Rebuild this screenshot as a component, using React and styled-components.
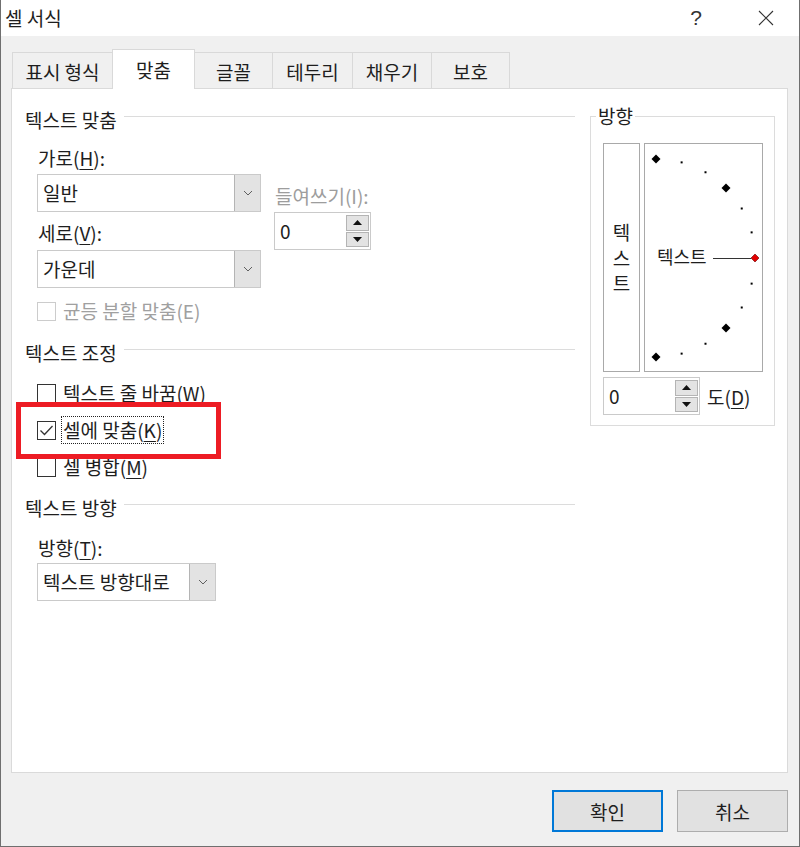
import React from "react";
import styled, { createGlobalStyle } from "styled-components";

const GlobalStyle = createGlobalStyle`
  html, body { margin: 0; padding: 0; background: #fff; }
  body { font-family: "Noto Sans CJK KR", "Noto Sans", sans-serif; }
`;

const Window = styled.div`
  position: relative;
  width: 800px;
  height: 847px;
  box-sizing: border-box;
  border: 1px solid #6f6f6f;
  border-top: none;
  background: #f0f0f0;
  display: flex;
  flex-direction: column;
  font-size: 19px;
  color: #1e1e1e;
`;

const TitleBar = styled.div`
  height: 36px;
  flex: none;
  background: #fff;
  display: flex;
  align-items: center;
  padding-left: 4px;
`;

const TitleText = styled.div`
  flex: 1;
  line-height: 36px;
`;

const TitleButton = styled.div`
  width: ${(p) => p.w}px;
  height: 36px;
  margin-right: ${(p) => p.mr || 0}px;
  display: flex;
  align-items: center;
  justify-content: center;
  color: #333;
  font-family: "Liberation Sans", sans-serif;
  font-size: 21px;
`;

const Body = styled.div`
  flex: 1;
  padding: 0 11px 0 10px;
  display: flex;
  flex-direction: column;
`;

const TabRow = styled.div`
  height: 52px;
  display: flex;
  align-items: flex-end;
  padding-left: 1px;
`;

const Tab = styled.div`
  position: relative;
  box-sizing: border-box;
  width: ${(p) => p.w}px;
  height: ${(p) => (p.active ? 40 : 36)}px;
  margin-left: -1px;
  margin-bottom: ${(p) => (p.active ? -1 : 0)}px;
  border: 1px solid #d9d9d9;
  border-bottom: none;
  background: ${(p) => (p.active ? "#fff" : "#f0f0f0")};
  z-index: ${(p) => (p.active ? 1 : 0)};
  display: flex;
  align-items: center;
  justify-content: center;
  padding-top: ${(p) => (p.active ? 0 : 1)}px;
  &:first-child { margin-left: 0; }
`;

const Panel = styled.div`
  box-sizing: border-box;
  height: 685px;
  background: #fff;
  border: 1px solid #dadada;
  display: flex;
  padding-left: 13px;
`;

const LeftColumn = styled.div`
  width: 550px;
  padding-top: 19px;
  display: flex;
  flex-direction: column;
`;

const SectionHeader = styled.div`
  display: flex;
  align-items: center;
  height: 24px;
  line-height: 24px;
  margin-top: ${(p) => p.mt || 0}px;
  &::after {
    content: "";
    flex: 1;
    height: 1px;
    background: #dcdcdc;
    margin-left: 7px;
    margin-bottom: 7px;
  }
`;

const Indent = styled.div`
  margin-left: 12px;
  display: flex;
  flex-direction: column;
`;

const FieldRow = styled.div`
  display: flex;
  margin-top: 14px;
`;

const FieldColumn = styled.div`
  display: flex;
  flex-direction: column;
  padding-top: ${(p) => p.pt || 0}px;
  margin-left: ${(p) => p.ml || 0}px;
`;

const Label = styled.div`
  height: 24px;
  line-height: 24px;
  padding-left: 1px;
  margin-top: ${(p) => p.mt || 0}px;
  color: ${(p) => (p.disabled ? "#9d9d9d" : "inherit")};
  u { text-underline-offset: 3px; text-decoration-thickness: 1px; }
`;

const SelectBox = styled.div`
  box-sizing: border-box;
  width: ${(p) => p.w}px;
  height: 38px;
  margin-top: ${(p) => p.mt || 0}px;
  border: 1px solid #cacaca;
  background: #fff;
  display: flex;
`;

const SelectValue = styled.div`
  flex: 1;
  padding-left: 5px;
  line-height: 36px;
`;

const SelectButton = styled.div`
  width: 25px;
  background: #e3e3e3;
  border-left: 1px solid #b4b4b4;
  display: flex;
  align-items: center;
  justify-content: center;
`;

const SpinBox = styled.div`
  box-sizing: border-box;
  width: 97px;
  height: 38px;
  margin-top: ${(p) => p.mt || 0}px;
  border: 1px solid #cacaca;
  background: #fff;
  display: flex;
`;

const SpinValue = styled.div`
  flex: 1;
  padding-left: 5px;
  line-height: 35px;
`;

const SpinButtons = styled.div`
  width: 23px;
  margin: 2px 1px 2px 0;
  display: flex;
  flex-direction: column;
  gap: 1px;
`;

const SpinButton = styled.div`
  flex: 1;
  box-sizing: border-box;
  background: #e3e3e3;
  border: 1px solid #b4b4b4;
  display: flex;
  align-items: center;
  justify-content: center;
`;

const CheckRow = styled.div`
  display: flex;
  align-items: center;
  height: 28px;
  margin-top: ${(p) => p.mt || 0}px;
  color: ${(p) => (p.disabled ? "#a0a0a0" : "inherit")};
  u { text-underline-offset: 3px; text-decoration-thickness: 1px; }
`;

const Box = styled.div`
  box-sizing: border-box;
  width: 19px;
  height: 19px;
  border: 1px solid ${(p) => (p.disabled ? "#cccccc" : "#333")};
  background: #fff;
  display: flex;
  align-items: center;
  justify-content: center;
`;

const CheckLabel = styled.span`
  margin-left: 5px;
  padding: 0 1px;
  line-height: 26px;
  border: 1px ${(p) => (p.focused ? "dotted #222" : "solid transparent")};
`;

const Highlight = styled.div`
  position: absolute;
  left: 15px;
  top: 402px;
  width: 205px;
  height: 57px;
  box-sizing: border-box;
  border: 5px solid #ed1c24;
  pointer-events: none;
`;

const GroupBox = styled.fieldset`
  box-sizing: border-box;
  width: 185px;
  height: 321px;
  margin: 16px 0 0 15px;
  padding: 16px 0 0 12px;
  border: 1px solid #dcdcdc;
  min-width: 0;
`;

const Legend = styled.legend`
  margin-left: -7px;
  padding: 0 2px;
  line-height: 22px;
`;

const OrientRow = styled.div`
  display: flex;
  gap: 4px;
`;

const VerticalText = styled.div`
  box-sizing: border-box;
  width: 37px;
  height: 229px;
  border: 1px solid #a9a9a9;
  display: flex;
  flex-direction: column;
  align-items: center;
  justify-content: center;
  line-height: 25.5px;
`;

const Dial = styled.div`
  box-sizing: border-box;
  width: 119px;
  height: 229px;
  border: 1px solid #a9a9a9;
  svg { display: block; }
`;

const DegreeRow = styled.div`
  display: flex;
  align-items: center;
  margin-top: 5px;
  u { text-underline-offset: 3px; text-decoration-thickness: 1px; }
`;

const Degree = styled.span`
  margin-left: 7px;
`;

const ButtonRow = styled.div`
  display: flex;
  justify-content: flex-end;
  gap: 14px;
  margin-top: 17px;
`;

const DialogButton = styled.div`
  box-sizing: border-box;
  width: 111px;
  height: 42px;
  background: #e1e1e1;
  border: ${(p) => (p.primary ? "2px solid #0078d7" : "1px solid #adadad")};
  display: flex;
  align-items: center;
  justify-content: center;
`;

const Chevron = () => (
  <svg width="10" height="6" viewBox="0 0 10 6">
    <polyline points="1,1 5,5 9,1" fill="none" stroke="#606060" strokeWidth="1" />
  </svg>
);

const Arrow = ({ up }) => (
  <svg width="9" height="5" viewBox="0 0 9 5">
    <polygon points={up ? "0,5 9,5 4.5,0" : "0,0 9,0 4.5,5"} fill="#111" />
  </svg>
);

const Select = ({ value, w, mt }) => (
  <SelectBox w={w} mt={mt}>
    <SelectValue>{value}</SelectValue>
    <SelectButton><Chevron /></SelectButton>
  </SelectBox>
);

const Spin = ({ value, mt }) => (
  <SpinBox mt={mt}>
    <SpinValue>{value}</SpinValue>
    <SpinButtons>
      <SpinButton><Arrow up /></SpinButton>
      <SpinButton><Arrow /></SpinButton>
    </SpinButtons>
  </SpinBox>
);

const Check = ({ checked, disabled, focused, mt, children }) => (
  <CheckRow mt={mt} disabled={disabled}>
    <Box disabled={disabled}>
      {checked && (
        <svg width="15" height="13" viewBox="0 0 15 13">
          <polyline points="1.5,6.5 5.5,10.5 13.5,2" fill="none" stroke="#333" strokeWidth="1.3" />
        </svg>
      )}
    </Box>
    <CheckLabel focused={focused}>{children}</CheckLabel>
  </CheckRow>
);

const cx = 11;
const cy = 114;
const r = 99;
const marks = [90, 75, 60, 45, 30, 15, -15, -30, -45, -60, -75, -90].map((deg) => {
  const a = (deg * Math.PI) / 180;
  return { x: cx + r * Math.cos(a), y: cy - r * Math.sin(a), big: Math.abs(deg) % 45 === 0 };
});

const diamond = (x, y, h) => `${x},${y - h} ${x + h},${y} ${x},${y + h} ${x - h},${y}`;

const OrientationDial = () => (
  <svg width="117" height="227" viewBox="0 0 117 227">
    {marks.map((m, i) =>
      m.big ? (
        <polygon key={i} points={diamond(m.x, m.y, 4.5)} fill="#000" />
      ) : (
        <rect key={i} x={m.x - 1} y={m.y - 1} width="2" height="2" fill="#000" />
      )
    )}
    <text x="12" y={cy + 6} fontSize="18" fill="#1e1e1e" fontFamily='"Noto Sans CJK KR", sans-serif'>텍스트</text>
    <line x1="68" y1={cy + 0.5} x2="106" y2={cy + 0.5} stroke="#333" strokeWidth="1" />
    <polygon points={diamond(cx + r, cy, 4)} fill="#e30000" stroke="#600" strokeWidth="0.6" />
  </svg>
);

const tabs = [
  { label: "표시 형식", w: 101 },
  { label: "맞춤", w: 83, active: true },
  { label: "글꼴", w: 79 },
  { label: "테두리", w: 81 },
  { label: "채우기", w: 80 },
  { label: "보호", w: 79 },
];

export default function App() {
  return (
    <Window>
      <GlobalStyle />
      <TitleBar>
        <TitleText>셀 서식</TitleText>
        <TitleButton w={40} mr={27}>?</TitleButton>
        <TitleButton w={46} mr={10}>
          <svg width="16" height="16" viewBox="0 0 16 16">
            <path d="M1 1 L15 15 M15 1 L1 15" stroke="#333" strokeWidth="1.1" />
          </svg>
        </TitleButton>
      </TitleBar>
      <Body>
        <TabRow>
          {tabs.map((t) => (
            <Tab key={t.label} w={t.w} active={t.active}>{t.label}</Tab>
          ))}
        </TabRow>
        <Panel>
          <LeftColumn>
            <SectionHeader>텍스트 맞춤</SectionHeader>
            <Indent>
              <FieldRow>
                <FieldColumn>
                  <Label>가로(<u>H</u>):</Label>
                  <Select value="일반" w={224} mt={4} />
                  <Label mt={9}>세로(<u>V</u>):</Label>
                  <Select value="가운데" w={224} mt={5} />
                </FieldColumn>
                <FieldColumn pt={38} ml={13}>
                  <Label disabled>들여쓰기(I):</Label>
                  <Spin value="0" mt={4} />
                </FieldColumn>
              </FieldRow>
              <Check disabled mt={9}>균등 분할 맞춤(E)</Check>
            </Indent>
            <SectionHeader mt={16}>텍스트 조정</SectionHeader>
            <Indent>
              <Check mt={14}>텍스트 줄 바꿈(<u>W</u>)</Check>
              <Check mt={9} checked focused>셀에 맞춤(<u>K</u>)</Check>
              <Check mt={9}>셀 병합(<u>M</u>)</Check>
            </Indent>
            <SectionHeader mt={15}>텍스트 방향</SectionHeader>
            <Indent>
              <Label mt={16}>방향(<u>T</u>):</Label>
              <Select value="텍스트 방향대로" w={179} mt={3} />
            </Indent>
          </LeftColumn>
          <GroupBox>
            <Legend>방향</Legend>
            <OrientRow>
              <VerticalText>
                <span>텍</span>
                <span>스</span>
                <span>트</span>
              </VerticalText>
              <Dial><OrientationDial /></Dial>
            </OrientRow>
            <DegreeRow>
              <Spin value="0" />
              <Degree>도(<u>D</u>)</Degree>
            </DegreeRow>
          </GroupBox>
        </Panel>
        <ButtonRow>
          <DialogButton primary>확인</DialogButton>
          <DialogButton>취소</DialogButton>
        </ButtonRow>
      </Body>
      <Highlight />
    </Window>
  );
}
